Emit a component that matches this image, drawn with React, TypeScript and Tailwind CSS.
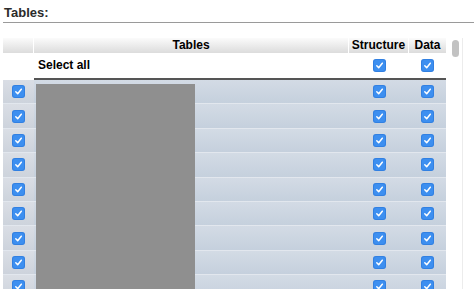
import React from 'react';

const ROWS = 9;

const Check: React.FC = () => (
  <span className="inline-flex h-[13px] w-[13px] items-center justify-center rounded-[3px] bg-[#3d8ff0] shadow-[inset_0_0_0_1px_rgba(30,100,200,0.35)]">
    <svg width="9" height="9" viewBox="0 0 9 9" fill="none">
      <path d="M1.8 4.8 L3.7 6.7 L7.3 2.2" stroke="#fff" strokeWidth="1.5" strokeLinecap="round" strokeLinejoin="round" />
    </svg>
  </span>
);

export default function App() {
  return (
    <div className="relative h-[299px] w-[474px] overflow-hidden bg-white font-['Liberation_Sans',Arial,sans-serif] text-black">
      <div className="pl-[4px] pt-[5px] text-[13px] font-bold leading-[15px] text-[#2b2b2b]">Tables:</div>
      <div className="ml-[3px] mt-[2px] h-px bg-[#9a9a9a]" />

      <div className="mt-[15px] flex">
        {/* table viewport */}
        <div className="relative ml-[3px] h-[251px] w-[443px] overflow-hidden">
          {/* header */}
          <div className="flex h-[15px] bg-gradient-to-b from-[#fbfbfb] to-[#dcdcdc] text-[12px] font-bold leading-[15px]">
            <div className="w-[31px] border-r border-white" />
            <div className="w-[315px] border-r border-white text-center">Tables</div>
            <div className="w-[60px] border-r border-white text-center">Structure</div>
            <div className="flex-1 text-center">Data</div>
          </div>

          {/* select all */}
          <div className="flex h-[25px] items-center bg-white text-[12px] font-bold">
            <div className="w-[31px]" />
            <div className="w-[315px] pl-[4px] pb-[1px]">Select all</div>
            <div className="flex w-[60px] justify-center"><Check /></div>
            <div className="flex flex-1 justify-center"><Check /></div>
          </div>
          <div className="ml-[31px] h-[2px] bg-[#555]" />

          {/* rows */}
          <div className="flex flex-col">
            {Array.from({ length: ROWS }).map((_, i) => (
              <div key={i} className="flex h-[24.4px] items-center border-b border-[#e2e7ee] bg-gradient-to-b from-[#d3dbe5] to-[#c5d0dd]">
                <div className="flex h-full w-[31px] items-center justify-center bg-gradient-to-b from-[#dadee5] to-[#cdd3dc]"><Check /></div>
                <div className="w-[315px]" />
                <div className="flex w-[60px] justify-center"><Check /></div>
                <div className="flex flex-1 justify-center"><Check /></div>
              </div>
            ))}
          </div>

          {/* redaction block */}
          <div className="absolute left-[33px] top-[46px] h-[206px] w-[159px] bg-[#8f8f8f]" />
        </div>

        {/* scroller */}
        <div className="ml-[6px] h-[251px] w-[11px] border-r border-[#ececec]">
          <div className="mt-[2px] h-[17px] w-[7px] rounded-full bg-[#c2c2c2]" />
        </div>
      </div>
    </div>
  );
}
